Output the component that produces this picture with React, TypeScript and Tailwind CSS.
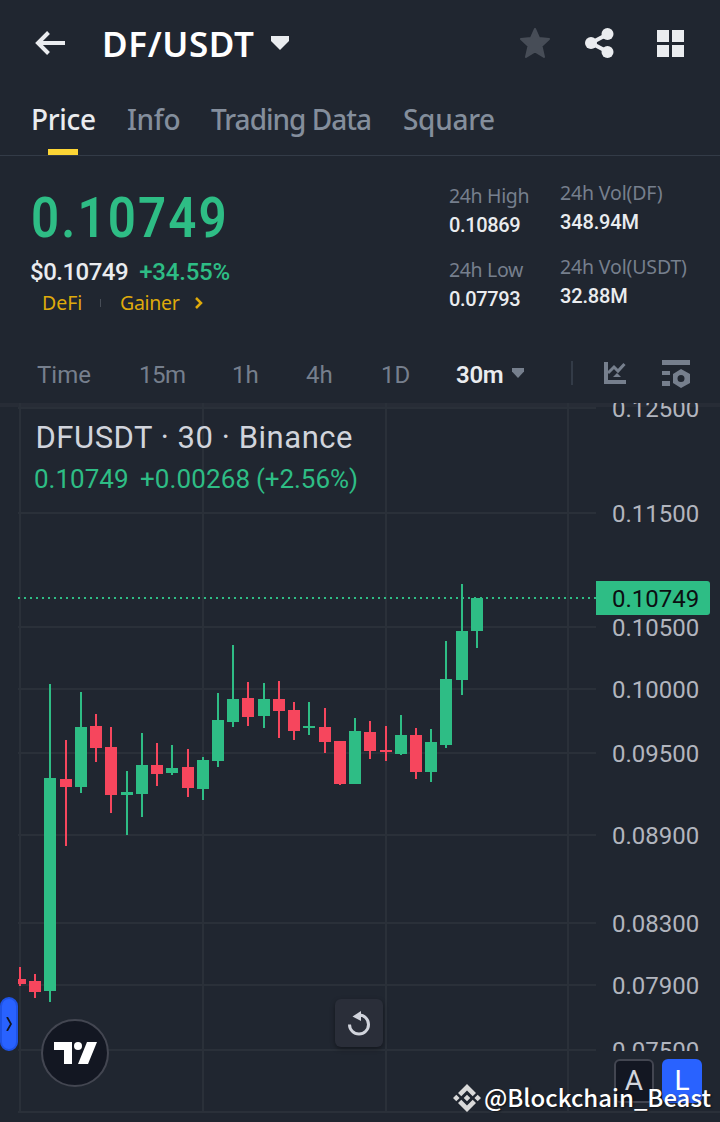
type Candle = {
    x: number;
    open: number;
    close: number;
    high: number;
    low: number;
    up?: boolean;
};

// Body top / bottom and wick top / bottom, in chart pixels
const candles: Candle[] = [
    { x: 20, open: 979, close: 984, high: 967, low: 986 },
    { x: 35, open: 981, close: 992, high: 974, low: 998 },
    { x: 50, open: 778, close: 991, high: 684, low: 1002, up: true },
    { x: 66, open: 779, close: 787, high: 740, low: 846 },
    { x: 81, open: 727, close: 787, high: 692, low: 793, up: true },
    { x: 96, open: 726, close: 748, high: 714, low: 762 },
    { x: 111, open: 747, close: 795, high: 727, low: 813 },
    { x: 127, open: 792, close: 795, high: 771, low: 835, up: true },
    { x: 142, open: 765, close: 794, high: 733, low: 817, up: true },
    { x: 157, open: 765, close: 774, high: 743, low: 786 },
    { x: 172, open: 768, close: 773, high: 745, low: 775, up: true },
    { x: 188, open: 767, close: 788, high: 749, low: 797 },
    { x: 203, open: 760, close: 789, high: 757, low: 800, up: true },
    { x: 218, open: 720, close: 761, high: 693, low: 767, up: true },
    { x: 233, open: 699, close: 722, high: 645, low: 727, up: true },
    { x: 248, open: 698, close: 717, high: 682, low: 726 },
    { x: 264, open: 699, close: 716, high: 683, low: 728, up: true },
    { x: 279, open: 699, close: 711, high: 681, low: 738 },
    { x: 294, open: 710, close: 731, high: 702, low: 740 },
    { x: 309, open: 726, close: 728, high: 702, low: 735, up: true },
    { x: 325, open: 727, close: 742, high: 708, low: 753 },
    { x: 340, open: 741, close: 784, high: 741, low: 785 },
    { x: 355, open: 731, close: 784, high: 718, low: 784, up: true },
    { x: 370, open: 732, close: 751, high: 721, low: 759 },
    { x: 386, open: 750, close: 752, high: 726, low: 761 },
    { x: 401, open: 735, close: 754, high: 715, low: 755, up: true },
    { x: 416, open: 735, close: 772, high: 728, low: 779 },
    { x: 431, open: 742, close: 772, high: 729, low: 782, up: true },
    { x: 446, open: 679, close: 745, high: 641, low: 748, up: true },
    { x: 462, open: 631, close: 680, high: 584, low: 695, up: true },
    { x: 477, open: 598, close: 631, high: 598, low: 648, up: true },
];

const levels = [
    { y: 408, label: '0.12500' },
    { y: 513.5, label: '0.11500' },
    { y: 627.5, label: '0.10500' },
    { y: 689.5, label: '0.10000' },
    { y: 753.5, label: '0.09500' },
    { y: 835.5, label: '0.08900' },
    { y: 923.5, label: '0.08300' },
    { y: 985.5, label: '0.07900' },
    { y: 1050, label: '0.07500' },
];

const columns = [20, 203, 386, 568];

const Header = () => (
    <header className="flex h-[86px] items-center pl-[35px] pr-9">
        <svg width="30" height="24" viewBox="0 0 30 24" fill="none" stroke="#eaecef" strokeWidth="4">
            <path d="M13.5 1.5 3 12l10.5 10.5M3 12h27" />
        </svg>
        <h1 className="mt-[2px] ml-[37px] w-[152px] whitespace-nowrap font-['Noto_Sans'] text-[35px] leading-[44px] font-semibold tracking-[0.6px] text-white">
            DF/USDT
        </h1>
        <svg className="ml-[17px]" width="18" height="14" viewBox="0 0 18 14" fill="#eaecef">
            <path d="M0 0h18v5L9 14 0 5z" />
        </svg>
        <div className="ml-auto flex items-center">
            <svg width="30" height="30" viewBox="0 0 30 30" fill="#474d57" stroke="#474d57" strokeWidth="2" strokeLinejoin="round">
                <path d="m15 1 4 9 10 1-7.500 7 2.500 11-9-5.500L6 29l2.500-11L1 11l10-1z" />
            </svg>
            <svg className="ml-[35px]" width="30" height="30" viewBox="0 0 30 30" fill="#eaecef">
                <path d="m6 15 17-9M6 15l17 9" stroke="#eaecef" strokeWidth="4" />
                <circle cx="6" cy="15" r="6" />
                <circle cx="22.500" cy="6" r="6" />
                <circle cx="22.500" cy="24" r="6" />
            </svg>
            <div className="ml-[42px] grid grid-cols-2 gap-[3px]">
                <span className="size-3 bg-[#eaecef]" />
                <span className="size-3 bg-[#eaecef]" />
                <span className="size-3 bg-[#eaecef]" />
                <span className="size-3 bg-[#eaecef]" />
            </div>
        </div>
    </header>
);

const Tabs = () => (
    <nav className="flex h-[70px] border-b border-[#333b47] pl-[31px] font-['Noto_Sans'] text-[28px] leading-[66px] font-medium tracking-[-0.3px] whitespace-nowrap text-[#848e9c]">
        <div className="flex w-24 flex-col">
            <span className="h-[63px] text-[#eaecef]">Price</span>
            <span className="ml-[17px] h-[6px] w-[30px] bg-[#fcd535]" />
        </div>
        <span className="w-[84px]">Info</span>
        <span className="w-48 tracking-[-1px]">Trading Data</span>
        <span>Square</span>
    </nav>
);

const Stat = ({ label, value }: { label: string; value: string }) => (
    <div className="h-[74px] whitespace-nowrap">
        <div className="font-['Noto_Sans'] text-[19.5px] leading-7 text-[#767f8d]">{label}</div>
        <div className="mt-[1px] font-['Roboto'] text-[20px] leading-7 font-medium text-[#eaecef]">{value}</div>
    </div>
);

const Summary = () => (
    <section className="flex h-[190px] pl-[31px]">
        <div className="w-[418px] pt-[30px]">
            <div className="w-max origin-left scale-x-[0.88] font-['Roboto'] text-[56px] leading-[64px] font-semibold tracking-[2.4px] text-[#2ebd85]">
                0.10749
            </div>
            <div className="mt-2 flex gap-[11px] font-['Roboto'] text-[24px] leading-7 font-medium tracking-[-0.5px]">
                <span className="-ml-px text-[#eaecef]">$0.10749</span>
                <span className="tracking-[-0.2px] text-[#2ebd85]">+34.55%</span>
            </div>
            <div className="mt-[3px] flex items-center pl-[11px] font-['Noto_Sans'] text-[19.5px] leading-7 text-[#dfaa0b]">
                <span className="w-[58px]">DeFi</span>
                <span className="h-2 w-px bg-[#474d57]" />
                <span className="ml-[19px] w-[75px] tracking-[-0.3px]">Gainer</span>
                <svg width="8" height="12" viewBox="0 0 8 12" fill="none" stroke="#dfaa0b" strokeWidth="2.500">
                    <path d="m1 1 5 5-5 5" />
                </svg>
            </div>
        </div>
        <div className="w-[111px] pt-[26px] tracking-[-0.35px]">
            <Stat label="24h High" value="0.10869" />
            <Stat label="24h Low" value="0.07793" />
        </div>
        <div className="pt-[23px] tracking-[-0.15px]">
            <Stat label="24h Vol(DF)" value="348.94M" />
            <Stat label="24h Vol(USDT)" value="32.88M" />
        </div>
    </section>
);

const Intervals = () => (
    <div className="flex h-[57px] items-center pl-[37px] font-['Roboto'] text-[24px] whitespace-nowrap text-[#767f8d]">
        <span className="w-[102px]">Time</span>
        <span className="w-[93px] tracking-[-0.5px]">15m</span>
        <span className="w-[74px]">1h</span>
        <span className="w-[75px]">4h</span>
        <span className="w-[75px]">1D</span>
        <span className="w-14 font-semibold tracking-[-0.3px] text-[#eaecef]">30m</span>
        <svg className="-mt-1" width="12" height="10" viewBox="0 0 12 10" fill="#767f8d">
            <path d="M0 0h12v3.500L6 10 0 3.500z" />
        </svg>
        <span className="-mt-1 ml-[47px] h-6 w-[2px] bg-[#333b47]" />
        <svg className="-mt-[3px] ml-[31px]" width="22" height="22" viewBox="0 0 22 22" fill="#767f8d">
            <path d="M0 0h4v18h18v4H0z" />
            <path d="m4 11 6-6 4 4 6.500-7" fill="none" stroke="#767f8d" strokeWidth="3" />
            <path d="m9 15 4-4 4 4z" />
        </svg>
        <svg className="-mt-[2px] ml-9" width="28" height="28" viewBox="0 0 28 28" fill="#767f8d">
            <path d="M0 0h28v5H0zM0 11h8v4H0zM0 21h8v5H0z" />
            <path fillRule="evenodd" d="m19 9 9 5v9l-9 5-8-5v-9zm0 6a3.500 3.500 0 1 0 0 7 3.500 3.500 0 0 0 0-7z" />
        </svg>
    </div>
);

const CandleChart = () => (
    <svg className="block font-['Roboto']" width="720" height="719" viewBox="0 403 720 719">
        <rect y="403" width="720" height="4" fill="#272c36" />
        <g fill="#2a3039">
            {columns.map(x => (
                <rect key={x} x={x - 1} y="403" width="2" height="709" />
            ))}
            {levels.map(({ y }) => (
                <rect key={y} x="18" y={Math.floor(y) - 1} width="578" height="2" />
            ))}
            <rect x="18" y="1111" width="702" height="2" />
        </g>

        {/* Last price */}
        <line x1="18" x2="596" y1="598" y2="598" stroke="#2ebd85" strokeWidth="2" strokeDasharray="2 4" />

        {candles.map(({ x, open, close, high, low, up }) => {
            const left = Math.max(x - 6, 18);
            return (
                <g key={x} fill={up ? '#2ebd85' : '#f6465d'}>
                    <rect x={x - 1} y={high} width="2" height={low - high} />
                    <rect x={left} y={open} width={x + 6 - left} height={close - open} />
                </g>
            );
        })}

        {/* Price axis */}
        <clipPath id="axis">
            <rect x="596" y="403" width="124" height="648" />
        </clipPath>
        <g clipPath="url(#axis)" fill="#b2b5be" fontSize="24">
            {levels.map(({ y, label }) => (
                <text key={label} x="612" y={Math.floor(y) + 9}>
                    {label}
                </text>
            ))}
        </g>
        <path d="M596 581h111a3 3 0 0 1 3 3v28a3 3 0 0 1-3 3H596z" fill="#2ebd85" />
        <text x="612" y="607" fontSize="24" fill="#0c0e12">
            0.10749
        </text>

        <text x="35.500" y="448" fontSize="31" fill="#d1d4dc" textLength="317">
            DFUSDT · 30 · Binance
        </text>
        <g fontSize="26" fill="#2ebd85">
            <text x="34" y="488">0.10749</text>
            <text x="140" y="488" textLength="110">+0.00268</text>
            <text x="256" y="488" textLength="102">(+2.56%)</text>
        </g>
    </svg>
);

const Chart = () => (
    <section className="relative h-[719px] overflow-hidden">
        <CandleChart />

        <button className="absolute top-[594px] left-0 flex h-[54px] w-[18px] items-center justify-center rounded-[9px] border-2 border-[#1e53e5] bg-[#2962ff]">
            <svg width="6" height="14" viewBox="0 0 6 14" fill="none" stroke="#131722" strokeWidth="1.800">
                <path d="m1 0 4 7-4 7" />
            </svg>
        </button>

        <div className="absolute top-[616px] left-[41px] flex size-[68px] items-center justify-center rounded-full border-2 border-[#434651] bg-[#131722]">
            <svg width="43" height="22" viewBox="0 0 43 22" fill="#fff">
                <path d="M0 0h18v22h-8V8H0z" />
                <circle cx="24" cy="4" r="4" />
                <path d="M33 0h10l-9 22H24z" />
            </svg>
        </div>

        <button className="absolute top-[596px] left-[335px] flex size-12 items-center justify-center rounded-md bg-[#2a2e39] shadow-[0_2px_5px_rgba(0,0,0,0.4)]">
            <svg width="24" height="28" viewBox="0 0 24 28">
                <path d="M2.500 15.500a9.500 9.500 0 1 0 9.500-9.500" fill="none" stroke="#d1d4dc" strokeWidth="3" />
                <path d="M14 2v10L5.500 7.500z" fill="#d1d4dc" />
            </svg>
        </button>

        <div className="absolute top-[656px] left-[614px] flex gap-2 font-['Roboto'] text-[28px] leading-[42px]">
            <button className="flex h-11 w-10 justify-center rounded-md border-2 border-[#434651] bg-[#131722] leading-[40px] text-[#d1d4dc]">
                A
            </button>
            <button className="flex h-11 w-10 justify-center rounded-md bg-[#2962ff] leading-[44px] text-white">L</button>
        </div>

        <div className="absolute top-[676px] left-[453px] flex items-center gap-[3px] whitespace-nowrap">
            <svg className="mt-px" width="28" height="28" viewBox="0 0 28 28" fill="#d9d9d9">
                <path d="m14 0 9 9-3.300 3.300L14 6.600l-5.700 5.700L5 9zM14 28l9-9-3.300-3.300-5.700 5.700-5.700-5.700L5 19zM14 10.700l3.300 3.300-3.300 3.300-3.300-3.300zM3.300 10.700 6.600 14l-3.300 3.300L0 14zM24.700 10.700 28 14l-3.300 3.300-3.300-3.300z" />
            </svg>
            <span className="font-['Noto_Sans_CJK_SC',sans-serif] text-[24px] leading-9 font-medium text-white [text-shadow:1px_1px_2px_rgba(0,0,0,0.6)]">
                @Blockchain_Beast
            </span>
        </div>
    </section>
);

export default function App() {
    return (
        <div className="h-[1122px] w-[720px] overflow-hidden bg-[#202630]">
            <Header />
            <Tabs />
            <Summary />
            <Intervals />
            <Chart />
        </div>
    );
}
